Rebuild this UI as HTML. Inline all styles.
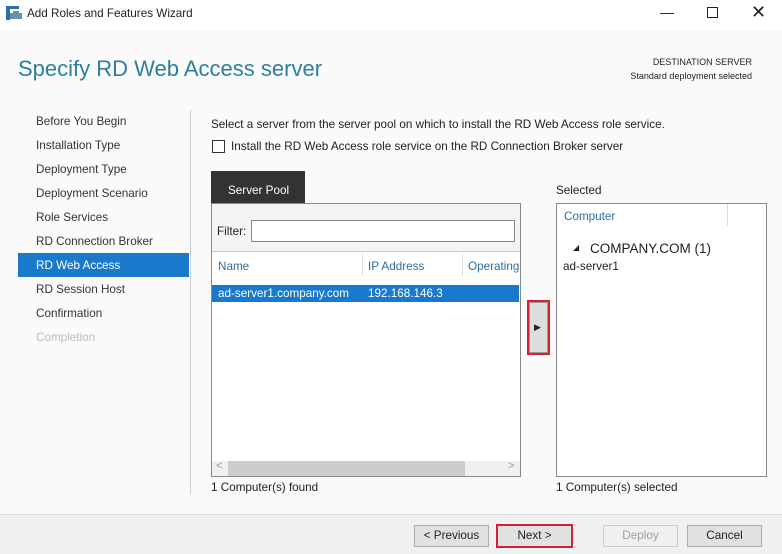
<!DOCTYPE html>
<html><head><meta charset="utf-8"><style>
*{margin:0;padding:0;box-sizing:border-box}
body{width:782px;height:554px;background:#fafafa;font-family:"Liberation Sans",sans-serif;font-size:11.7px;color:#222;position:relative;overflow:hidden}
.a{position:absolute;white-space:nowrap}
.nav{position:absolute;left:36px;color:#333;font-size:11.7px}
.btn{position:absolute;top:525px;height:22px;width:75px;border:1px solid #adadad;background:#e1e1e1;text-align:center;line-height:20px;font-size:11.7px}
</style></head><body>
<div class="a" style="left:0;top:0;width:782px;height:30px;background:#fff"></div>
<svg class="a" style="left:6px;top:6px" width="16" height="14"><rect x="0" y="0" width="4" height="14" fill="#2a6fb0"/><rect x="4" y="0" width="9" height="3" fill="#2a6fb0"/><rect x="4" y="7" width="12" height="6" fill="#6a8fb0"/><rect x="7" y="5" width="6" height="3" fill="#6a8fb0"/></svg>
<div class="a" style="left:27px;top:7px;font-size:11.7px">Add Roles and Features Wizard</div>
<div class="a" style="left:660px;top:4px;font-size:14px">&#8212;</div>
<div class="a" style="left:707px;top:7px;width:11px;height:11px;border:1px solid #222"></div>
<div class="a" style="left:751px;top:2px;font-size:18px;font-weight:300">&#x2715;</div>
<div class="a" style="left:18px;top:56px;font-size:22px;color:#2e7ea0">Specify RD Web Access server</div>
<div class="a" style="right:30px;top:55px;font-size:9px;text-align:right;line-height:14px">DESTINATION SERVER<br>Standard deployment selected</div>
<div class="nav" style="top:115px">Before You Begin</div>
<div class="nav" style="top:139px">Installation Type</div>
<div class="nav" style="top:163px">Deployment Type</div>
<div class="nav" style="top:187px">Deployment Scenario</div>
<div class="nav" style="top:211px">Role Services</div>
<div class="nav" style="top:235px">RD Connection Broker</div>
<div class="a" style="left:18px;top:253px;width:171px;height:24px;background:#1979ca"></div>
<div class="nav" style="top:259px;color:#fff">RD Web Access</div>
<div class="nav" style="top:283px">RD Session Host</div>
<div class="nav" style="top:307px">Confirmation</div>
<div class="nav" style="top:331px;color:#bbb">Completion</div>
<div class="a" style="left:190px;top:110px;width:1px;height:384px;background:#ccc"></div>
<div class="a" style="left:211px;top:118px">Select a server from the server pool on which to install the RD Web Access role service.</div>
<div class="a" style="left:212px;top:140px;width:13px;height:13px;border:1px solid #333;background:#fff"></div>
<div class="a" style="left:231px;top:140px">Install the RD Web Access role service on the RD Connection Broker server</div>
<div class="a" style="left:211px;top:171px;width:94px;height:33px;background:#333;color:#fff;padding:13px 0 0 17px">Server Pool</div>
<div class="a" style="left:211px;top:203px;width:310px;height:274px;border:1px solid #888;background:#fff"></div>
<div class="a" style="left:212px;top:204px;width:308px;height:48px;background:#f4f4f4;border-bottom:1px solid #ccc"></div>
<div class="a" style="left:217px;top:225px">Filter:</div>
<div class="a" style="left:251px;top:220px;width:264px;height:22px;border:1px solid #888;background:#fff"></div>
<div class="a" style="left:218px;top:260px;color:#2e6ea0">Name</div>
<div class="a" style="left:362px;top:254px;width:1px;height:22px;background:#ddd"></div>
<div class="a" style="left:368px;top:260px;color:#2e6ea0">IP Address</div>
<div class="a" style="left:462px;top:254px;width:1px;height:22px;background:#ddd"></div>
<div class="a" style="left:468px;top:260px;color:#2e6ea0;width:51px;overflow:hidden">Operating</div>
<div class="a" style="left:212px;top:285px;width:307px;height:17px;background:#1979ca"></div>
<div class="a" style="left:218px;top:287px;color:#fff">ad-server1.company.com</div>
<div class="a" style="left:368px;top:287px;color:#fff">192.168.146.3</div>
<div class="a" style="left:212px;top:461px;width:308px;height:15px;background:#f0f0f0"></div>
<div class="a" style="left:228px;top:461px;width:237px;height:15px;background:#cdcdcd"></div>
<div class="a" style="left:216px;top:460px;color:#999;font-size:11px">&lt;</div>
<div class="a" style="left:508px;top:460px;color:#999;font-size:11px">&gt;</div>
<div class="a" style="left:211px;top:481px">1 Computer(s) found</div>
<div class="a" style="left:527px;top:300px;width:23px;height:55px;border:2px solid #d42030;background:#ddd"></div>
<div class="a" style="left:529px;top:302px;width:19px;height:51px;border:1px solid #999"></div>
<div class="a" style="left:534px;top:322px;font-size:9px">&#9654;</div>
<div class="a" style="left:556px;top:184px">Selected</div>
<div class="a" style="left:556px;top:203px;width:211px;height:274px;border:1px solid #888;background:#fff"></div>
<div class="a" style="left:727px;top:204px;width:1px;height:22px;background:#ddd"></div>
<div class="a" style="left:564px;top:210px;color:#2e6ea0">Computer</div>
<div class="a" style="left:573px;top:243px;font-size:8px">&#9698;</div>
<div class="a" style="left:590px;top:241px;font-size:13.5px">COMPANY.COM (1)</div>
<div class="a" style="left:563px;top:260px">ad-server1</div>
<div class="a" style="left:556px;top:481px">1 Computer(s) selected</div>
<div class="a" style="left:0;top:514px;width:782px;height:40px;background:#f0f0f0;border-top:1px solid #ddd"></div>
<div class="btn" style="left:414px">&lt; Previous</div>
<div class="btn" style="left:496px;width:77px;height:24px;top:524px;border:2px solid #d42030;line-height:20px">Next &gt;</div>
<div class="btn" style="left:603px;background:#f0f0f0;border-color:#ccc;color:#a0a0a0">Deploy</div>
<div class="btn" style="left:687px">Cancel</div>
</body></html>
